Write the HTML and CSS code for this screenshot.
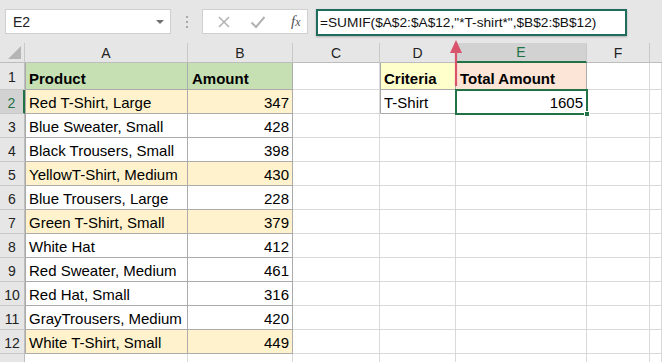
FILE: index.html
```html
<!DOCTYPE html>
<html>
<head>
<meta charset="utf-8">
<link rel="stylesheet" href="styles.css">
</head>
<body>
<div class="app">
  <div class="fbar">
    <div class="namebox"><span>E2</span><span class="dd"></span></div>
    <div class="grip"><i></i><i></i><i></i></div>
    <div class="fxbox">
      <svg class="ic" width="14" height="14" viewBox="0 0 14 14"><path d="M2 2L12 12M12 2L2 12" stroke="#b3b3b3" stroke-width="1.6" fill="none"/></svg>
      <svg class="ic" width="16" height="14" viewBox="0 0 16 14"><path d="M1.5 7.5L6 12L14.5 2" stroke="#b3b3b3" stroke-width="2" fill="none"/></svg>
      <span class="fx">f<span class="fxx">x</span></span>
    </div>
    <div class="formula">=SUMIF($A$2:$A$12,"*T-shirt*",$B$2:$B$12)</div>
  </div>
  <div class="sheet">
    <div class="hd corner"><span class="tri"></span></div>
    <div class="hd">A</div>
    <div class="hd">B</div>
    <div class="hd">C</div>
    <div class="hd">D</div>
    <div class="hd sel">E</div>
    <div class="hd">F</div>
    <div class="hd last"></div>

    <div class="rh">1</div>
    <div class="c tb green b">Product</div>
    <div class="c tb green b">Amount</div>
    <div class="c"></div>
    <div class="c tb lemon b">Criteria</div>
    <div class="c tb peach b">Total Amount</div>
    <div class="c"></div>
    <div class="c"></div>

    <div class="rh rsel">2</div>
    <div class="c tb yel">Red T-Shirt, Large</div>
    <div class="c tb yel num">347</div>
    <div class="c"></div>
    <div class="c tb">T-Shirt</div>
    <div class="c tb num active">1605<span class="handle"></span></div>
    <div class="c"></div>
    <div class="c"></div>

    <div class="rh">3</div>
    <div class="c tb">Blue Sweater, Small</div>
    <div class="c tb num">428</div>
    <div class="c"></div><div class="c"></div><div class="c"></div><div class="c"></div><div class="c"></div>

    <div class="rh">4</div>
    <div class="c tb">Black Trousers, Small</div>
    <div class="c tb num">398</div>
    <div class="c"></div><div class="c"></div><div class="c"></div><div class="c"></div><div class="c"></div>

    <div class="rh">5</div>
    <div class="c tb yel">YellowT-Shirt, Medium</div>
    <div class="c tb yel num">430</div>
    <div class="c"></div><div class="c"></div><div class="c"></div><div class="c"></div><div class="c"></div>

    <div class="rh">6</div>
    <div class="c tb">Blue Trousers, Large</div>
    <div class="c tb num">228</div>
    <div class="c"></div><div class="c"></div><div class="c"></div><div class="c"></div><div class="c"></div>

    <div class="rh">7</div>
    <div class="c tb yel">Green T-Shirt, Small</div>
    <div class="c tb yel num">379</div>
    <div class="c"></div><div class="c"></div><div class="c"></div><div class="c"></div><div class="c"></div>

    <div class="rh">8</div>
    <div class="c tb">White Hat</div>
    <div class="c tb num">412</div>
    <div class="c"></div><div class="c"></div><div class="c"></div><div class="c"></div><div class="c"></div>

    <div class="rh">9</div>
    <div class="c tb">Red Sweater, Medium</div>
    <div class="c tb num">461</div>
    <div class="c"></div><div class="c"></div><div class="c"></div><div class="c"></div><div class="c"></div>

    <div class="rh">10</div>
    <div class="c tb">Red Hat, Small</div>
    <div class="c tb num">316</div>
    <div class="c"></div><div class="c"></div><div class="c"></div><div class="c"></div><div class="c"></div>

    <div class="rh">11</div>
    <div class="c tb">GrayTrousers, Medium</div>
    <div class="c tb num">420</div>
    <div class="c"></div><div class="c"></div><div class="c"></div><div class="c"></div><div class="c"></div>

    <div class="rh">12</div>
    <div class="c tb yel">White T-Shirt, Small</div>
    <div class="c tb yel num">449</div>
    <div class="c"></div><div class="c"></div><div class="c"></div><div class="c"></div><div class="c"></div>

    <div class="rh">13</div>
    <div class="c"></div><div class="c"></div><div class="c"></div><div class="c"></div><div class="c"></div><div class="c"></div><div class="c"></div>
  </div>
  <svg class="arrow" width="14" height="46" viewBox="0 0 14 46">
    <path d="M7 12V46" stroke="#d9546a" stroke-width="2.2"/>
    <path d="M7 0L13 13H1Z" fill="#d9546a"/>
  </svg>
</div>
</body>
</html>
```
FILE: styles.css
```css
* { box-sizing: border-box; }
html, body { margin: 0; padding: 0; background: #fff; }
body { width: 662px; height: 362px; overflow: hidden; font-family: "Liberation Sans", Arial, sans-serif; }
.app { position: relative; width: 662px; height: 362px; overflow: hidden; }

.fbar {
  display: flex; align-items: flex-start;
  height: 43px; background: #e6e6e6;
  padding: 9px 0 0 5px;
}
.namebox {
  width: 166px; height: 25px; background: #fff; border: 1px solid #d0d0d0;
  display: flex; align-items: center; justify-content: space-between;
  padding: 0 6px 0 7px; font-size: 14px; color: #222;
}
.dd { width: 0; height: 0; border-left: 4px solid transparent; border-right: 4px solid transparent; border-top: 4px solid #707070; }
.grip { width: 31px; height: 25px; display: flex; flex-direction: column; align-items: center; justify-content: center; gap: 3px; }
.grip i { display: block; width: 2px; height: 2px; background: #a8a8a8; }
.fxbox {
  width: 106px; height: 25px; background: #fff; border: 1px solid #d0d0d0;
  display: flex; align-items: center; padding: 0 0 0 14px; gap: 19px;
}
.fx { font-family: "Liberation Serif", serif; font-style: italic; font-size: 15px; color: #555; margin-left: 6px; }
.fxx { font-size: 12px; }
.formula {
  margin-left: 8px; width: 311px; height: 27px; background: #fff;
  border: 2px solid #1f6b5c; font-size: 13.7px; color: #111;
  padding: 4px 0 0 2px; white-space: nowrap; box-shadow: 0 1px 2px rgba(0,0,0,0.25);
}

.sheet {
  display: grid;
  grid-template-columns: 25px 163px 105px 87px 76px 131px 63px 12px;
  grid-template-rows: 20px 27px repeat(12, 24px);
}
.hd {
  background: #e6e6e6; border-right: 1px solid #c8c8c8; border-bottom: 1px solid #bdbdbd;
  font-size: 14px; color: #222; display: flex; align-items: center; justify-content: center;
}
.corner { position: relative; }
.tri { position: absolute; right: 3px; bottom: 3px; width: 0; height: 0; border-left: 13px solid transparent; border-bottom: 13px solid #b5b5b5; }
.hd.sel { background: #d2d2d2; color: #217346; border-bottom: 2px solid #217346; }
.hd.last { border-right: none; }
.rh {
  background: #e6e6e6; border-right: 1px solid #bdbdbd; border-bottom: 1px solid #c8c8c8;
  font-size: 14px; color: #222; display: flex; align-items: center; justify-content: center; padding-top: 2px;
}
.rh.rsel { background: #d2d2d2; color: #217346; border-right: 2px solid #217346; }
.c {
  border-right: 1px solid #d9d9d9; border-bottom: 1px solid #d9d9d9;
  font-size: 15px; color: #000; display: flex; align-items: flex-end; padding: 0 3px 2px 4px;
  white-space: nowrap; position: relative;
}
.c.tb { border-right-color: #ababab; border-bottom-color: #ababab; }
.sheet > .c:nth-child(8n+2).tb { box-shadow: inset 1px 0 0 #ababab; }
.sheet > .c:nth-child(8n+5).tb { box-shadow: inset 1px 0 0 #ababab; }
.b { font-weight: bold; }
.green { background: #c6e0b4; }
.yel { background: #fff2cc; }
.lemon { background: #ffffcc; }
.peach { background: #fce4d6; }
.num { justify-content: flex-end; }
.active { outline: 2px solid #217346; outline-offset: -1px; z-index: 2; }
.handle { position: absolute; right: -4px; bottom: -4px; width: 6px; height: 6px; background: #217346; border: 1px solid #fff; }

.arrow { position: absolute; left: 449px; top: 40px; }
```
